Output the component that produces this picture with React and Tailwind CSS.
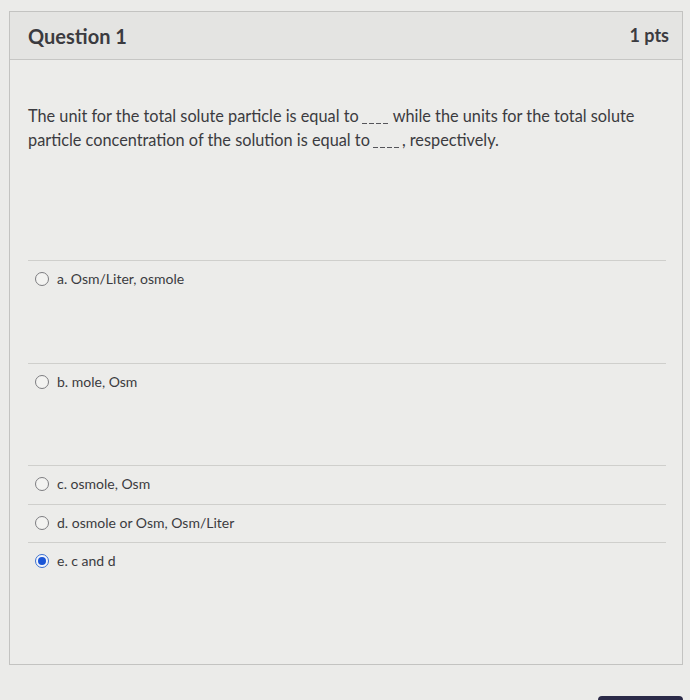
import React from "react";

const answers = [
  { id: "a", label: "a. Osm/Liter, osmole", h: "h-[103px]" },
  { id: "b", label: "b. mole, Osm", h: "h-[102px]" },
  { id: "c", label: "c. osmole, Osm", h: "h-[39px]" },
  { id: "d", label: "d. osmole or Osm, Osm/Liter", h: "h-[38px]" },
  { id: "e", label: "e. c and d", h: "h-[38px]", checked: true },
];

function Radio({ checked }) {
  if (checked) {
    return (
      <span className="flex h-[14px] w-[14px] items-center justify-center rounded-full border border-[#3b6fd0] bg-[#f4f6fb]">
        <span className="h-[8px] w-[8px] rounded-full bg-[#1a55d6]" />
      </span>
    );
  }
  return <span className="h-[14px] w-[14px] rounded-full border border-[#7d7d80] bg-[#f3f3f1]" />;
}

// Fill-in blank drawn as a short dashed rule sitting just under the baseline
function Blank({ tight }) {
  return (
    <span
      className={
        tight
          ? "ml-[3px] mr-[1px] inline-block h-[1px] w-[28px] translate-y-[2px] bg-[repeating-linear-gradient(90deg,#55555a_0_5px,transparent_5px_7px)]"
          : "mx-[3px] inline-block h-[1px] w-[28px] translate-y-[2px] bg-[repeating-linear-gradient(90deg,#55555a_0_5px,transparent_5px_7px)]"
      }
    />
  );
}

export default function App() {
  return (
    <div
      className="relative h-[700px] w-[690px] overflow-hidden bg-[#ebebe9] pl-[9px] pt-[11px]"
      style={{ fontFamily: "Lato, 'Open Sans', sans-serif" }}
    >
      <div className="flex h-[654px] w-[674px] flex-col border border-[#c3c3c1] bg-[#ececea]">
        <div className="flex h-[48px] shrink-0 items-center justify-between border-b border-[#c6c6c4] bg-[#e4e4e2] pl-[18px] pr-[13px]">
          <span className="text-[20px] font-bold text-[#3b3b40]">Question 1</span>
          <span className="text-[18px] font-bold text-[#3b3b40]">1 pts</span>
        </div>
        <div className="flex flex-1 flex-col pl-[18px] pr-[16px] pt-[44px]">
          <p className="h-[156px] text-[16.3px] leading-[24px] text-[#3b3b40]">
            The unit for the total solute particle is equal to
            <Blank />
            while the units for the total solute
            <br />
            particle concentration of the solution is equal to
            <Blank tight />
            , respectively.
          </p>
          {answers.map((a) => (
            <div key={a.id} className={`${a.h} border-t border-[#cfcfcc] pt-[9px]`}>
              <div className="flex items-center gap-[8px] pl-[7px]">
                <Radio checked={a.checked} />
                <span className="text-[14px] leading-[18px] text-[#3b3b40]">{a.label}</span>
              </div>
            </div>
          ))}
        </div>
      </div>
      <div className="absolute bottom-0 right-[7px] h-[4px] w-[85px] rounded-t-[4px] bg-[#2b2a48]" />
    </div>
  );
}
